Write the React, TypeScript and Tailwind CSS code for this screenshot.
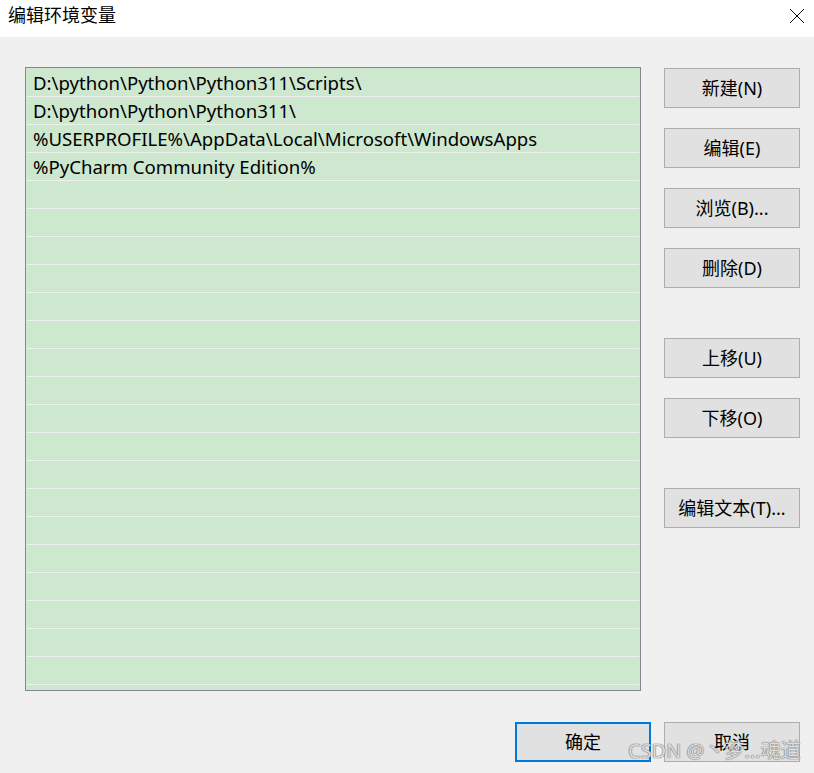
import React from "react";

const paths = [
  "D:\\python\\Python\\Python311\\Scripts\\",
  "D:\\python\\Python\\Python311\\",
  "%USERPROFILE%\\AppData\\Local\\Microsoft\\WindowsApps",
  "%PyCharm Community Edition%",
];

const font = { fontFamily: '"Segoe UI", "Noto Sans", "Noto Sans CJK SC", sans-serif' };

function Btn({ label, primary = false }: { label: string; primary?: boolean }) {
  return (
    <button
      className={`w-[136px] h-[40px] bg-[#e1e1e1] text-[18px] text-black flex items-center justify-center ${
        primary ? "border-2 border-[#0078d7]" : "border border-[#adadad]"
      }`}
    >
      {label}
    </button>
  );
}

export default function App() {
  const rows = Array.from({ length: 22 }, (_, i) => paths[i] ?? "");

  return (
    <div className="relative w-[814px] h-[773px] bg-[#f0f0f0] flex flex-col overflow-hidden" style={font}>
      {/* Title bar */}
      <div className="h-[37px] bg-white flex items-center justify-between pl-[8px] pr-[9px]">
        <span className="text-[18px] text-black -mt-[6px]">编辑环境变量</span>
        <svg width="16" height="16" viewBox="0 0 16 16" className="-mt-[6px]">
          <path d="M1 1 L15 15 M15 1 L1 15" stroke="#111" strokeWidth="1" />
        </svg>
      </div>

      {/* List + side buttons */}
      <div className="flex pt-[30px] pl-[25px] gap-[23px]">
        <div className="w-[616px] h-[624px] border border-[#828790] bg-[#cee7cf] pt-px px-px overflow-hidden">
          {rows.map((text, i) => (
            <div
              key={i}
              className="h-[28px] border-b border-[#eef1ee] pl-[6px] text-[18.6px] leading-[28px] text-black whitespace-nowrap"
            >
              {text}
            </div>
          ))}
        </div>

        <div className="flex flex-col w-[136px] mt-px">
          <div className="flex flex-col gap-[20px]">
            <Btn label="新建(N)" />
            <Btn label="编辑(E)" />
            <Btn label="浏览(B)..." />
            <Btn label="删除(D)" />
          </div>
          <div className="flex flex-col gap-[20px] mt-[50px]">
            <Btn label="上移(U)" />
            <Btn label="下移(O)" />
          </div>
          <div className="mt-[50px]">
            <Btn label="编辑文本(T)..." />
          </div>
        </div>
      </div>

      {/* Bottom buttons */}
      <div className="flex justify-end gap-[13px] pr-[14px] mt-[31px]">
        <Btn label="确定" primary />
        <Btn label="取消" />
      </div>

      {/* Watermark */}
      <div className="absolute left-[628px] top-[736px] text-[20px] text-white/80 [text-shadow:0_0_1px_#555,0_0_1px_#555] whitespace-nowrap">
        CSDN @丶梦...魂道
      </div>
    </div>
  );
}
